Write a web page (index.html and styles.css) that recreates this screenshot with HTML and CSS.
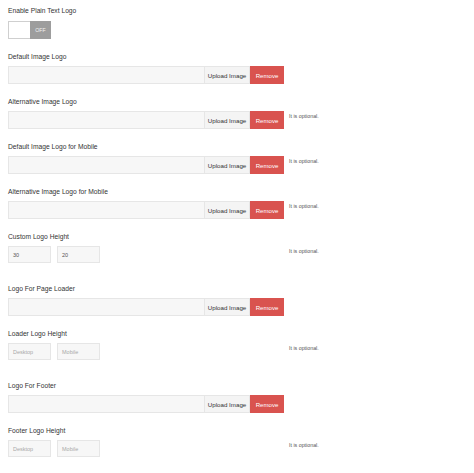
FILE: index.html
```html
<!DOCTYPE html>
<html>
<head>
<meta charset="utf-8">
<link rel="stylesheet" href="styles.css">
</head>
<body>
<div class="page">
  <div class="field">
    <div class="label">Enable Plain Text Logo</div>
    <div class="toggle"><span class="toggle-on"></span><span class="toggle-off">OFF</span></div>
  </div>

  <div class="field">
    <div class="label">Default Image Logo</div>
    <div class="row">
      <div class="group"><div class="input"></div><div class="btn-upload">Upload Image</div><div class="btn-remove">Remove</div></div>
    </div>
  </div>

  <div class="field">
    <div class="label">Alternative Image Logo</div>
    <div class="row">
      <div class="group"><div class="input"></div><div class="btn-upload">Upload Image</div><div class="btn-remove">Remove</div></div>
      <div class="note">It is optional.</div>
    </div>
  </div>

  <div class="field">
    <div class="label">Default Image Logo for Mobile</div>
    <div class="row">
      <div class="group"><div class="input"></div><div class="btn-upload">Upload Image</div><div class="btn-remove">Remove</div></div>
      <div class="note">It is optional.</div>
    </div>
  </div>

  <div class="field">
    <div class="label">Alternative Image Logo for Mobile</div>
    <div class="row">
      <div class="group"><div class="input"></div><div class="btn-upload">Upload Image</div><div class="btn-remove">Remove</div></div>
      <div class="note">It is optional.</div>
    </div>
  </div>

  <div class="field field-height">
    <div class="label">Custom Logo Height</div>
    <div class="row">
      <div class="sizes"><div class="size">30</div><div class="size">20</div></div>
      <div class="note">It is optional.</div>
    </div>
  </div>

  <div class="field">
    <div class="label">Logo For Page Loader</div>
    <div class="row">
      <div class="group"><div class="input"></div><div class="btn-upload">Upload Image</div><div class="btn-remove">Remove</div></div>
    </div>
  </div>

  <div class="field field-height">
    <div class="label">Loader Logo Height</div>
    <div class="row">
      <div class="sizes"><div class="size placeholder">Desktop</div><div class="size placeholder">Mobile</div></div>
      <div class="note">It is optional.</div>
    </div>
  </div>

  <div class="field">
    <div class="label">Logo For Footer</div>
    <div class="row">
      <div class="group"><div class="input"></div><div class="btn-upload">Upload Image</div><div class="btn-remove">Remove</div></div>
    </div>
  </div>

  <div class="field field-height">
    <div class="label">Footer Logo Height</div>
    <div class="row">
      <div class="sizes"><div class="size placeholder">Desktop</div><div class="size placeholder">Mobile</div></div>
      <div class="note">It is optional.</div>
    </div>
  </div>
</div>
</body>
</html>
```

FILE: styles.css
```css
html, body {
  margin: 0;
  padding: 0;
  background: #ffffff;
}

.page {
  padding: 7px 8px;
  font-family: "Liberation Sans", Arial, sans-serif;
  color: #333333;
}

.field {
  margin-bottom: 14px;
}

.field-height {
  margin-bottom: 22px;
}

.label {
  font-size: 6.7px;
  line-height: 8px;
  height: 8px;
  margin-bottom: 5px;
  color: #333333;
  white-space: nowrap;
}

.field:first-child .label {
  margin-bottom: 6px;
}

.toggle {
  display: flex;
  width: 43px;
  height: 18px;
  box-sizing: border-box;
}

.toggle-on {
  width: 22px;
  box-sizing: border-box;
  border: 1px solid #cfcfcf;
  border-right: none;
  background: #ffffff;
}

.toggle-off {
  flex: 1;
  background: #9d9d9d;
  color: #f2f2f2;
  font-size: 5.2px;
  display: flex;
  align-items: center;
  justify-content: center;
}

.row {
  display: flex;
  align-items: flex-start;
}

.group {
  display: flex;
  width: 276px;
  height: 18px;
}

.input {
  flex: 1;
  background: #f7f7f7;
  border: 1px solid #e6e6e6;
  border-right: none;
}

.btn-upload {
  width: 46px;
  box-sizing: border-box;
  background: #f4f4f4;
  border: 1px solid #e6e6e6;
  color: #333333;
  font-size: 6.2px;
  display: flex;
  align-items: center;
  justify-content: center;
  white-space: nowrap;
}

.btn-remove {
  width: 34px;
  background: #d9534f;
  color: #ffffff;
  font-size: 6.1px;
  display: flex;
  align-items: center;
  justify-content: center;
}

.note {
  margin-left: 5px;
  margin-top: 2px;
  font-size: 5.3px;
  line-height: 6px;
  color: #555555;
  white-space: nowrap;
}

.sizes {
  width: 276px;
  display: flex;
  gap: 6px;
}

.size {
  width: 43px;
  height: 17px;
  box-sizing: border-box;
  background: #f7f7f7;
  border: 1px solid #e6e6e6;
  font-size: 5.5px;
  color: #555555;
  padding-left: 4px;
  display: flex;
  align-items: center;
}

.size.placeholder {
  color: #a8a8a8;
}
```
